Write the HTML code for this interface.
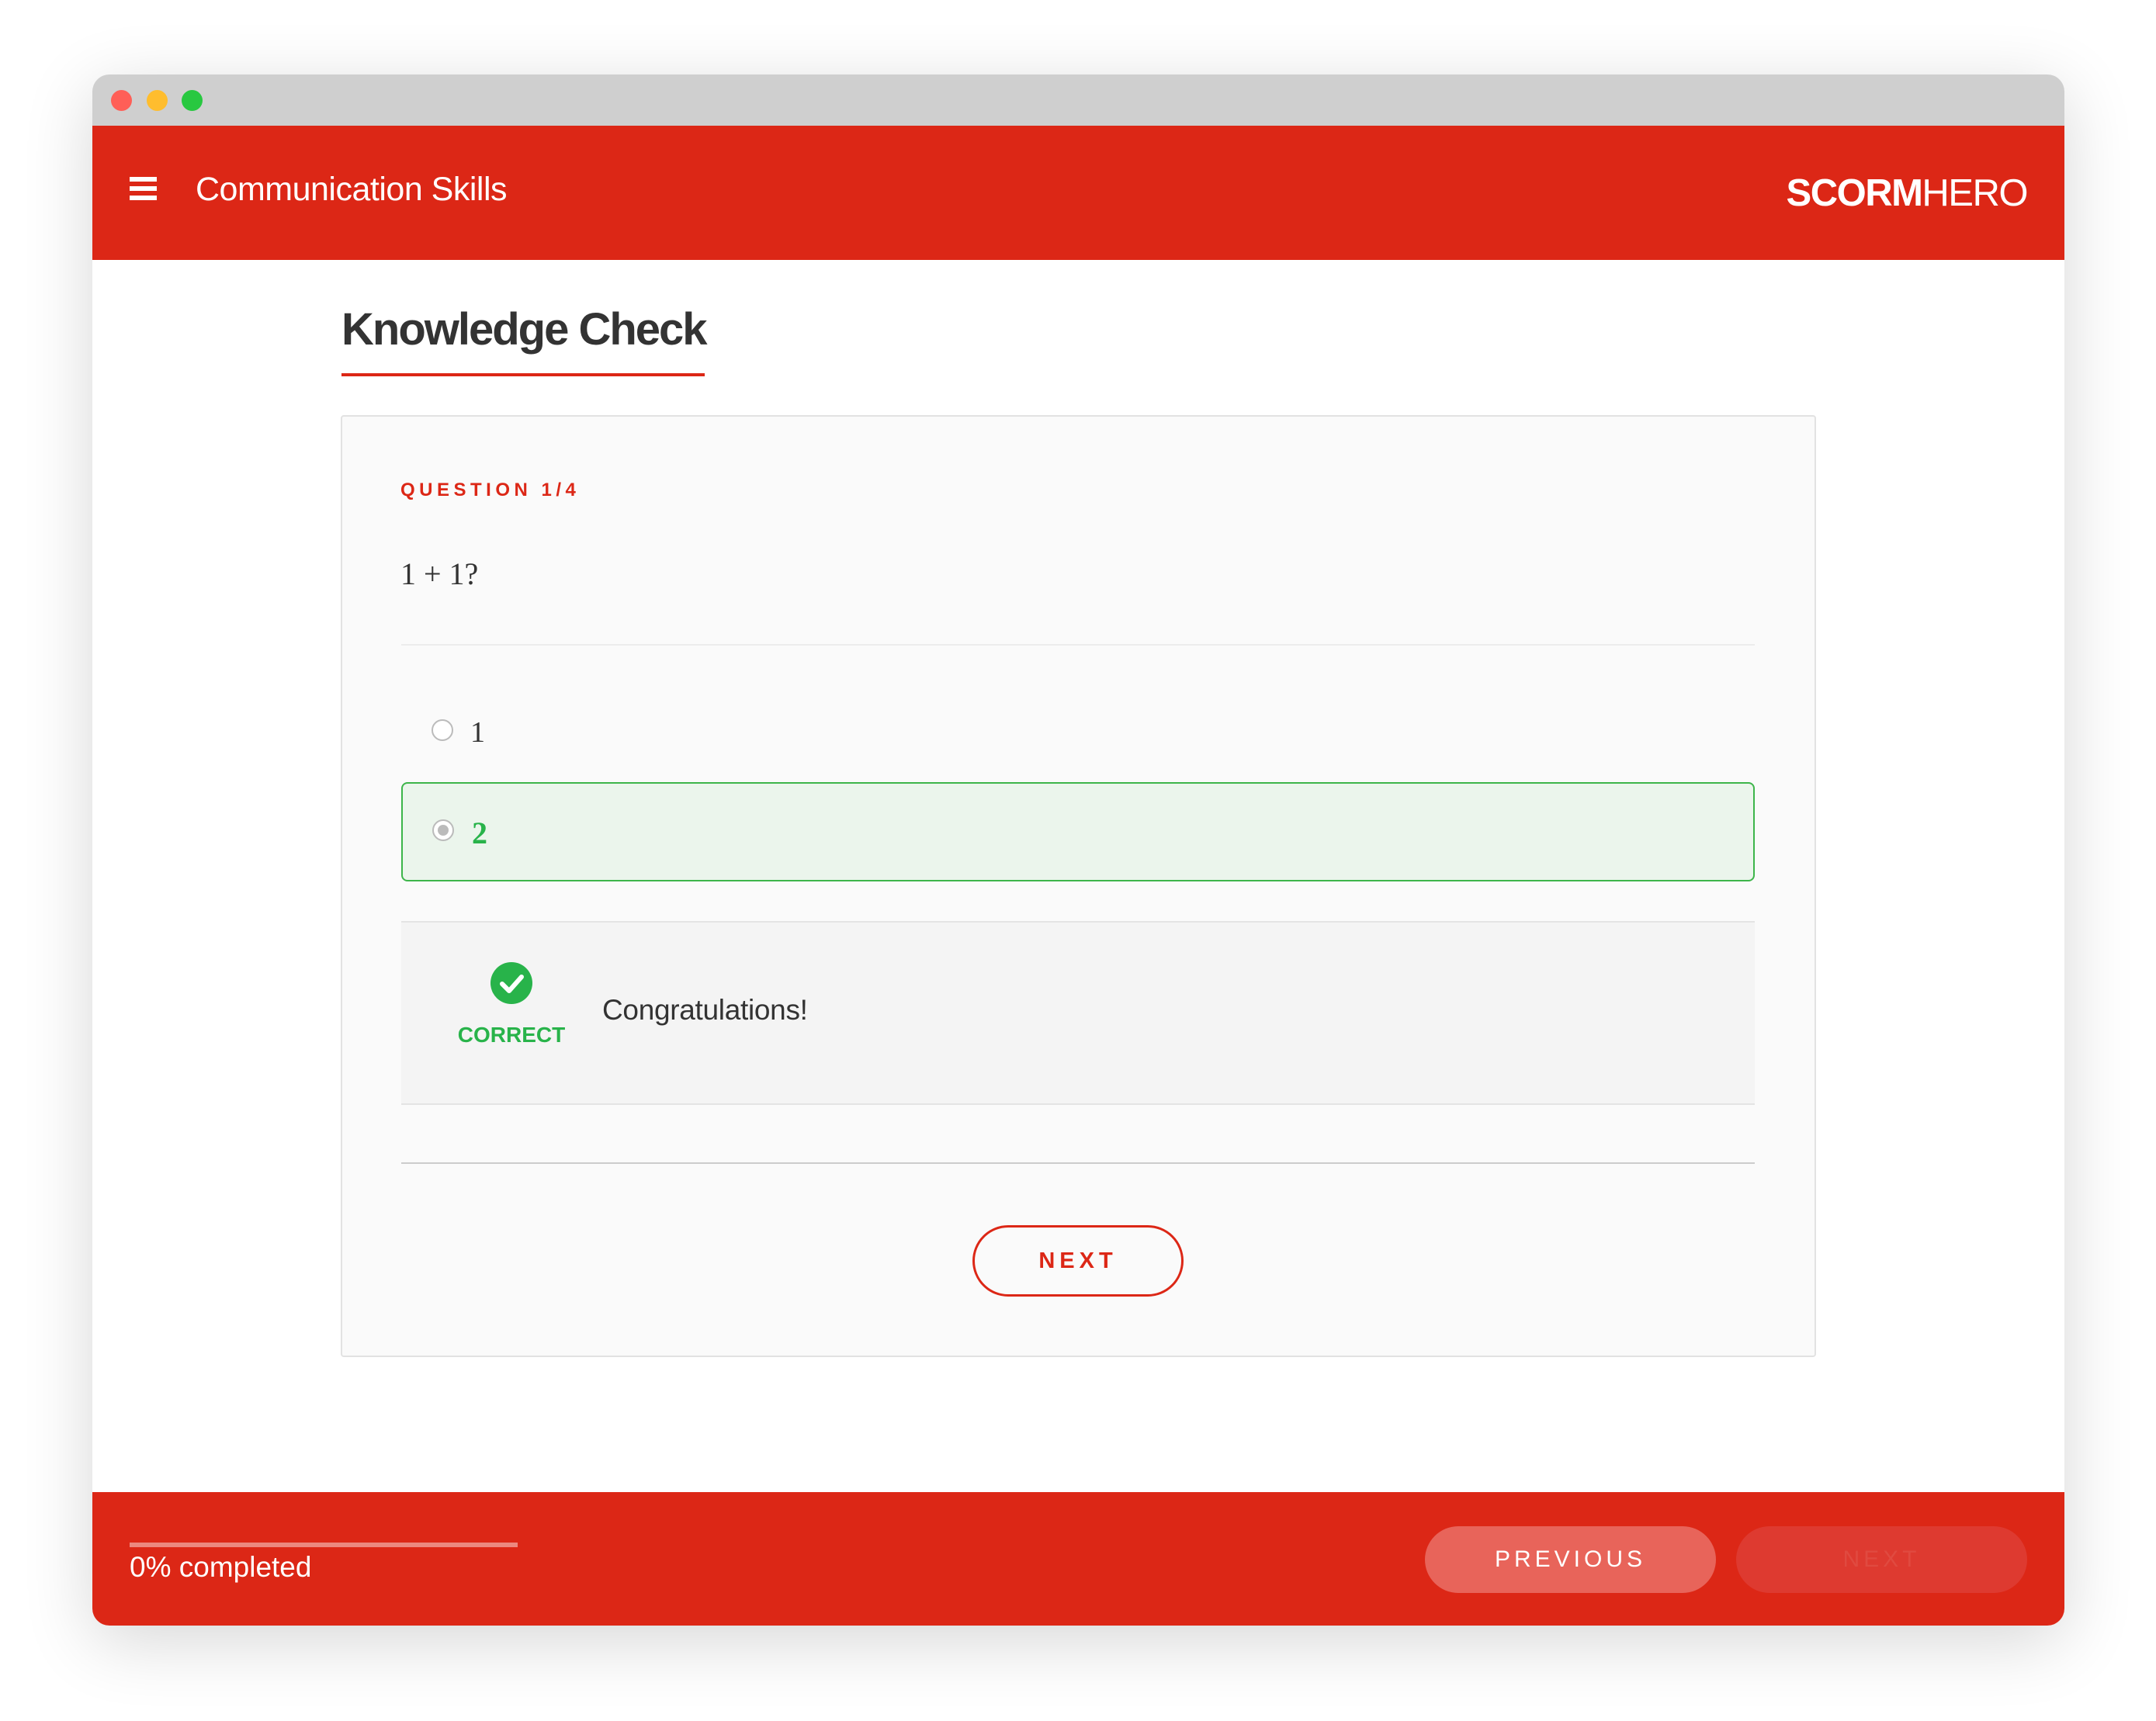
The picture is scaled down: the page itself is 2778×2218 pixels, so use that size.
<!DOCTYPE html>
<html><head><meta charset="utf-8"><style>
*{margin:0;padding:0;box-sizing:border-box}
body{width:2778px;height:2218px;background:#fff;position:relative;overflow:hidden;font-family:"Liberation Sans",sans-serif}
.win{position:absolute;left:119px;top:96px;width:2541px;height:1999px;border-radius:22px;background:#fff;box-shadow:0 20px 90px rgba(0,0,0,.16);overflow:hidden}
.tb{position:absolute;left:0;top:0;width:100%;height:66px;background:#cfcfcf}
.dot{position:absolute;top:20px;width:27px;height:27px;border-radius:50%}
.hd{position:absolute;left:0;top:66px;width:100%;height:173px;background:#dc2716}
.ab{position:absolute;color:#fff}
.ft{position:absolute;left:0;top:1827px;width:100%;height:172px;background:#dc2716}
.a{position:absolute}
</style></head><body>
<div class="win">
 <div class="tb">
  <div class="dot" style="left:24px;background:#ff5f57"></div>
  <div class="dot" style="left:70px;background:#ffbd2e"></div>
  <div class="dot" style="left:115px;background:#28c840"></div>
 </div>
 <div class="hd">
  <div class="a" style="left:48px;top:66px;width:35px;height:6px;background:#fff"></div>
  <div class="a" style="left:48px;top:78px;width:35px;height:6px;background:#fff"></div>
  <div class="a" style="left:48px;top:90px;width:35px;height:6px;background:#fff"></div>
  <div class="ab" style="left:133px;top:52px;font-size:43px;line-height:60px;letter-spacing:-0.5px">Communication Skills</div>
  <div class="ab" style="right:48px;top:54px;font-size:49px;line-height:66px;letter-spacing:-1.5px"><b>SCORM</b>HERO</div>
 </div>
 <div class="a" style="left:321px;top:294px;font-size:58px;font-weight:bold;color:#333;letter-spacing:-2px;line-height:70px">Knowledge Check</div>
 <div class="a" style="left:321px;top:385px;width:468px;height:4px;background:#dc2716"></div>
 <div class="a" style="left:320px;top:439px;width:1901px;height:1214px;background:#fafafa;border:2px solid #e2e2e2;border-radius:4px"></div>
 <div class="a" style="left:397px;top:522px;font-size:24px;font-weight:bold;color:#dc2716;letter-spacing:5.5px">QUESTION 1/4</div>
 <div class="a" style="left:397px;top:620px;font-family:'Liberation Serif',serif;font-size:40px;color:#333">1 + 1?</div>
 <div class="a" style="left:398px;top:734px;width:1744px;height:2px;background:#ececec"></div>
 <div class="a" style="left:437px;top:831px;width:28px;height:28px;border-radius:50%;border:2px solid #bbb;background:#fff"></div>
 <div class="a" style="left:487px;top:826px;font-family:'Liberation Serif',serif;font-size:38px;color:#333">1</div>
 <div class="a" style="left:398px;top:912px;width:1744px;height:128px;border:2px solid #3db54a;border-radius:8px;background:#ebf5ec"></div>
 <div class="a" style="left:438px;top:960px;width:28px;height:28px;border-radius:50%;border:2px solid #bbb;background:#fff"><div style="position:absolute;left:5px;top:5px;width:14px;height:14px;border-radius:50%;background:#bbb"></div></div>
 <div class="a" style="left:489px;top:954px;font-family:'Liberation Serif',serif;font-size:40px;font-weight:bold;color:#28b34a">2</div>
 <div class="a" style="left:398px;top:1091px;width:1744px;height:237px;background:#f4f4f4;border-top:2px solid #e4e4e4;border-bottom:2px solid #e4e4e4"></div>
 <svg class="a" style="left:513px;top:1144px" width="54" height="54" viewBox="0 0 54 54"><circle cx="27" cy="27" r="27" fill="#28b34a"/><path d="M15 28 L24 37 L40 19" stroke="#fff" stroke-width="6" fill="none" stroke-linecap="round" stroke-linejoin="round"/></svg>
 <div class="a" style="left:460px;top:1222px;width:160px;text-align:center;font-size:28px;color:#28b34a;font-weight:bold">CORRECT</div>
 <div class="a" style="left:657px;top:1185px;font-size:37px;color:#333;letter-spacing:-0.3px">Congratulations!</div>
 <div class="a" style="left:398px;top:1402px;width:1744px;height:2px;background:#ccc"></div>
 <div class="a" style="left:1134px;top:1483px;width:272px;height:92px;border:3px solid #dc2716;border-radius:46px;text-align:center;line-height:86px;font-size:29px;font-weight:bold;color:#dc2716;letter-spacing:6px">NEXT</div>
 <div class="ft">
  <div class="a" style="left:48px;top:65px;width:500px;height:6px;background:rgba(255,255,255,.45)"></div>
  <div class="a" style="left:48px;top:76px;font-size:37px;color:#fff">0% completed</div>
  <div class="a" style="left:1717px;top:44px;width:375px;height:86px;border-radius:43px;background:#e8645a;color:#fff;text-align:center;line-height:86px;font-size:30px;letter-spacing:5px">PREVIOUS</div>
  <div class="a" style="left:2118px;top:44px;width:375px;height:86px;border-radius:43px;background:#de3a30;color:#e04a40;text-align:center;line-height:86px;font-size:30px;letter-spacing:5px">NEXT</div>
 </div>
</div>
</body></html>
